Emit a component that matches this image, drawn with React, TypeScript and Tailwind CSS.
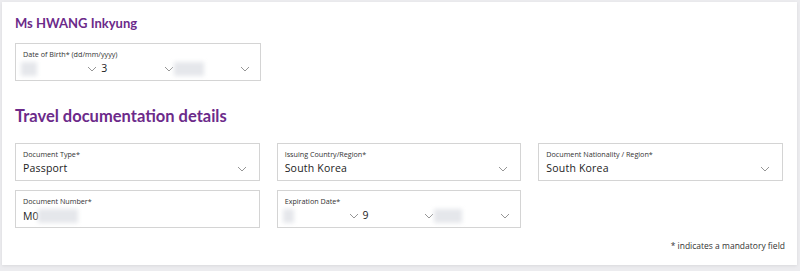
import React from 'react';

const font = { fontFamily: 'Lato, "Open Sans", sans-serif' };
const fieldFont = { fontFamily: '"Open Sans", Lato, sans-serif' };

function Chevron() {
  return (
    <svg width="10" height="6" viewBox="0 0 10 6" className="shrink-0">
      <path d="M1 1l4 4 4-4" fill="none" stroke="#8a8a8a" strokeWidth="0.9" />
    </svg>
  );
}

function Blur({ w }: { w: number }) {
  return <div className="h-[14px] bg-gray-200 blur-[2px]" style={{ width: w }} />;
}

function SelectField({ label, value }: { label: string; value: string }) {
  return (
    <div className="h-[38px] border border-[#d4d4d4] bg-white px-[7px] pt-[5px]" style={fieldFont}>
      <div className="text-[7.2px] leading-[10px] text-[#333]">{label}</div>
      <div className="flex items-center justify-between pr-[5px] mt-[3px]">
        <span className="text-[10.5px] leading-[13px] tracking-[0.2px] text-[#222]">{value}</span>
        <Chevron />
      </div>
    </div>
  );
}

function DateField({ label, day, month, year }: { label: string; day: number; month: string; year: number }) {
  return (
    <div className="h-[38px] border border-[#d4d4d4] bg-white pl-[5px] pr-[10px] pt-[5px]" style={fieldFont}>
      <div className="text-[7.2px] leading-[10px] text-[#333] pl-[2px]">{label}</div>
      <div className="grid grid-cols-3 mt-[3px]">
        {[
          { node: <Blur w={day} /> },
          { node: <span className="text-[10.5px] leading-[13px] text-[#222] pl-[4px]">{month}</span> },
          { node: <Blur w={year} /> },
        ].map((c, i) => (
          <div key={i} className="flex items-center justify-between h-[13px]">
            {c.node}
            <Chevron />
          </div>
        ))}
      </div>
    </div>
  );
}

export default function App() {
  return (
    <div className="w-[800px] h-[271px] bg-[#ececef] p-[2px] pr-[3px]" style={font}>
      <div className="bg-white h-[263px] shadow-[0_1px_3px_rgba(0,0,0,0.08)] px-[13px] pt-[13px]">
        <h2 className="text-[13px] leading-[16px] font-bold text-[#6c2a8a]">Ms HWANG Inkyung</h2>
        <div className="w-[246px] mt-[12px]">
          <DateField label="Date of Birth* (dd/mm/yyyy)" day={16} month="3" year={30} />
        </div>

        <h2 className="text-[16.5px] leading-[20px] font-bold text-[#6c2a8a] mt-[25px]">
          Travel documentation details
        </h2>

        <div className="grid grid-cols-3 gap-x-[17px] gap-y-[9px] w-[768px] mt-[17px]">
          <SelectField label="Document Type*" value="Passport" />
          <SelectField label="Issuing Country/Region*" value="South Korea" />
          <SelectField label="Document Nationality / Region*" value="South Korea" />
          <div className="h-[38px] border border-[#d4d4d4] bg-white px-[7px] pt-[5px]" style={fieldFont}>
            <div className="text-[7.2px] leading-[10px] text-[#333]">Document Number*</div>
            <div className="flex items-center mt-[3px]">
              <span className="text-[10.5px] leading-[13px] text-[#222]">M0</span>
              <div className="h-[14px] w-[40px] bg-gray-200 blur-[2px]" />
            </div>
          </div>
          <DateField label="Expiration Date*" day={11} month="9" year={28} />
        </div>

        <div className="w-[770px] text-right text-[8.5px] text-[#333] mt-[12px]" style={fieldFont}>
          * indicates a mandatory field
        </div>
      </div>
    </div>
  );
}
